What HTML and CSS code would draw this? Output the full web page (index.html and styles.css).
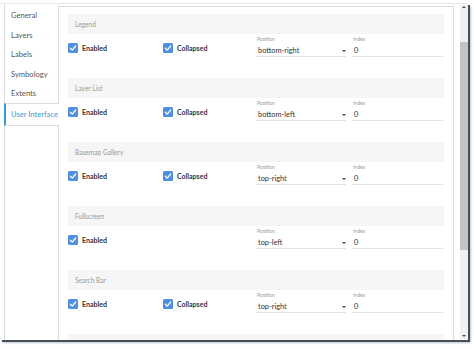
FILE: index.html
```html
<!DOCTYPE html>
<html>
<head>
<meta charset="utf-8">
<link rel="stylesheet" href="styles.css">
</head>
<body>
<div class="window">
  <nav class="tabs">
    <div class="tab">General</div>
    <div class="tab">Layers</div>
    <div class="tab">Labels</div>
    <div class="tab">Symbology</div>
    <div class="tab">Extents</div>
    <div class="tab active">User Interface</div>
  </nav>
  <main class="panel">
    <section class="sec">
      <div class="sec-head">Legend</div>
      <div class="row">
        <label class="chk c1"><svg class="box" viewBox="0 0 10 10"><rect width="10" height="10" rx="1.5"/><path d="M2.4 5.3 L4.3 7.1 L7.7 3"/></svg>Enabled</label>
        <label class="chk c2"><svg class="box" viewBox="0 0 10 10"><rect width="10" height="10" rx="1.5"/><path d="M2.4 5.3 L4.3 7.1 L7.7 3"/></svg>Collapsed</label>
        <div class="field pos"><div class="flabel">Position</div><div class="fval">bottom-right<span class="caret"></span></div></div>
        <div class="field idx"><div class="flabel">Index</div><div class="fval">0</div></div>
      </div>
    </section>
    <section class="sec">
      <div class="sec-head">Layer List</div>
      <div class="row">
        <label class="chk c1"><svg class="box" viewBox="0 0 10 10"><rect width="10" height="10" rx="1.5"/><path d="M2.4 5.3 L4.3 7.1 L7.7 3"/></svg>Enabled</label>
        <label class="chk c2"><svg class="box" viewBox="0 0 10 10"><rect width="10" height="10" rx="1.5"/><path d="M2.4 5.3 L4.3 7.1 L7.7 3"/></svg>Collapsed</label>
        <div class="field pos"><div class="flabel">Position</div><div class="fval">bottom-left<span class="caret"></span></div></div>
        <div class="field idx"><div class="flabel">Index</div><div class="fval">0</div></div>
      </div>
    </section>
    <section class="sec">
      <div class="sec-head">Basemap Gallery</div>
      <div class="row">
        <label class="chk c1"><svg class="box" viewBox="0 0 10 10"><rect width="10" height="10" rx="1.5"/><path d="M2.4 5.3 L4.3 7.1 L7.7 3"/></svg>Enabled</label>
        <label class="chk c2"><svg class="box" viewBox="0 0 10 10"><rect width="10" height="10" rx="1.5"/><path d="M2.4 5.3 L4.3 7.1 L7.7 3"/></svg>Collapsed</label>
        <div class="field pos"><div class="flabel">Position</div><div class="fval">top-right<span class="caret"></span></div></div>
        <div class="field idx"><div class="flabel">Index</div><div class="fval">0</div></div>
      </div>
    </section>
    <section class="sec">
      <div class="sec-head">Fullscreen</div>
      <div class="row">
        <label class="chk c1"><svg class="box" viewBox="0 0 10 10"><rect width="10" height="10" rx="1.5"/><path d="M2.4 5.3 L4.3 7.1 L7.7 3"/></svg>Enabled</label>
        <div class="c2"></div>
        <div class="field pos"><div class="flabel">Position</div><div class="fval">top-left<span class="caret"></span></div></div>
        <div class="field idx"><div class="flabel">Index</div><div class="fval">0</div></div>
      </div>
    </section>
    <section class="sec">
      <div class="sec-head">Search Bar</div>
      <div class="row">
        <label class="chk c1"><svg class="box" viewBox="0 0 10 10"><rect width="10" height="10" rx="1.5"/><path d="M2.4 5.3 L4.3 7.1 L7.7 3"/></svg>Enabled</label>
        <label class="chk c2"><svg class="box" viewBox="0 0 10 10"><rect width="10" height="10" rx="1.5"/><path d="M2.4 5.3 L4.3 7.1 L7.7 3"/></svg>Collapsed</label>
        <div class="field pos"><div class="flabel">Position</div><div class="fval">top-right<span class="caret"></span></div></div>
        <div class="field idx"><div class="flabel">Index</div><div class="fval">0</div></div>
      </div>
    </section>
    <section class="sec">
      <div class="sec-head">Map Scale</div>
    </section>
  </main>
  <div class="scrollbar">
    <span class="arrow up"></span>
    <div class="track"><div class="thumb"></div></div>
    <span class="arrow down"></span>
  </div>
</div>
</body>
</html>
```

FILE: styles.css
```css
html, body {
  margin: 0;
  padding: 0;
  background: #fff;
}
body {
  font-family: "Lato", "Noto Sans", sans-serif;
  color: #333;
  width: 474px;
  height: 349px;
  overflow: hidden;
}
.window {
  margin-top: 3px;
  width: 468px;
  height: 337px;
  border-top: 1px solid #e6e6e6;
  box-sizing: border-box;
  display: flex;
  overflow: hidden;
  padding-left: 4px;
  box-shadow: 2px 2px 0 #46505a, 3px 3px 2px rgba(70, 80, 90, 0.35);
  background: #fff;
}
.tabs {
  width: 54px;
  flex: none;
  border-left: 1px solid #dcdcdc;
  box-sizing: border-box;
  padding-top: 2px;
  position: relative;
  z-index: 1;
}
.tab {
  height: 19.6px;
  line-height: 19.6px;
  font-size: 7.6px;
  color: #555;
  padding-left: 6px;
  white-space: nowrap;
}
.tab.active {
  color: #3b9ad8;
  background: #fff;
  border-top: 1px solid #dcdcdc;
  border-bottom: 1px solid #dcdcdc;
  border-left: 2px solid #3b9ad8;
  margin-left: -1px;
  margin-right: -1px;
  padding-left: 5px;
  height: 21px;
  line-height: 21px;
  margin-top: -1px;
}
.panel {
  width: 396px;
  flex: none;
  margin-top: 2px;
  border: 1px solid #dcdcdc;
  border-bottom: none;
  box-sizing: border-box;
  padding: 7px 9px 0 9px;
  align-self: flex-start;
}
.sec-head {
  height: 20px;
  line-height: 20px;
  background: #f6f6f6;
  color: #9a9a9a;
  font-size: 6.6px;
  padding-left: 7px;
}
.row {
  height: 44px;
  display: flex;
  align-items: flex-start;
}
.chk {
  display: flex;
  align-items: center;
  margin-top: 9px;
  height: 10px;
  font-size: 7px;
  font-weight: bold;
  color: #333;
}
.c1 { width: 95px; flex: none; }
.c2 { width: 93px; flex: none; }
.box {
  width: 10px;
  height: 10px;
  margin-right: 4px;
  flex: none;
}
.box rect { fill: #4d8fe0; }
.box path {
  fill: none;
  stroke: #fff;
  stroke-width: 1.3;
  stroke-linecap: round;
  stroke-linejoin: round;
}
.field {
  margin-top: 2px;
  border-bottom: 1px solid #e4e4e4;
  flex: none;
}
.pos { width: 90px; margin-right: 6px; }
.idx { width: 91px; }
.flabel {
  font-size: 5px;
  line-height: 7px;
  color: #999;
  padding-left: 1px;
}
.fval {
  padding-top: 2px;
  height: 11px;
  line-height: 11px;
  font-size: 7.4px;
  color: #333;
  padding-left: 2px;
  display: flex;
  align-items: center;
}
.caret {
  margin-left: auto;
  margin-right: 0;
  width: 0;
  height: 0;
  border-left: 2.5px solid transparent;
  border-right: 2.5px solid transparent;
  border-top: 2.5px solid #444;
}
.scrollbar {
  width: 8px;
  flex: none;
  margin-left: 6px;
  margin-top: 1px;
  height: 334px;
  background: #f1f1f1;
  display: flex;
  flex-direction: column;
  align-items: center;
}
.arrow {
  width: 0;
  height: 0;
  border-left: 2px solid transparent;
  border-right: 2px solid transparent;
  flex: none;
}
.arrow.up {
  margin-top: 1px;
  border-bottom: 2.5px solid #505050;
}
.arrow.down {
  margin-bottom: 2px;
  border-top: 2.5px solid #505050;
}
.track {
  flex: 1;
  width: 100%;
}
.thumb {
  margin-top: 34px;
  height: 208px;
  width: 8px;
  background: #c3c3c3;
}
```
